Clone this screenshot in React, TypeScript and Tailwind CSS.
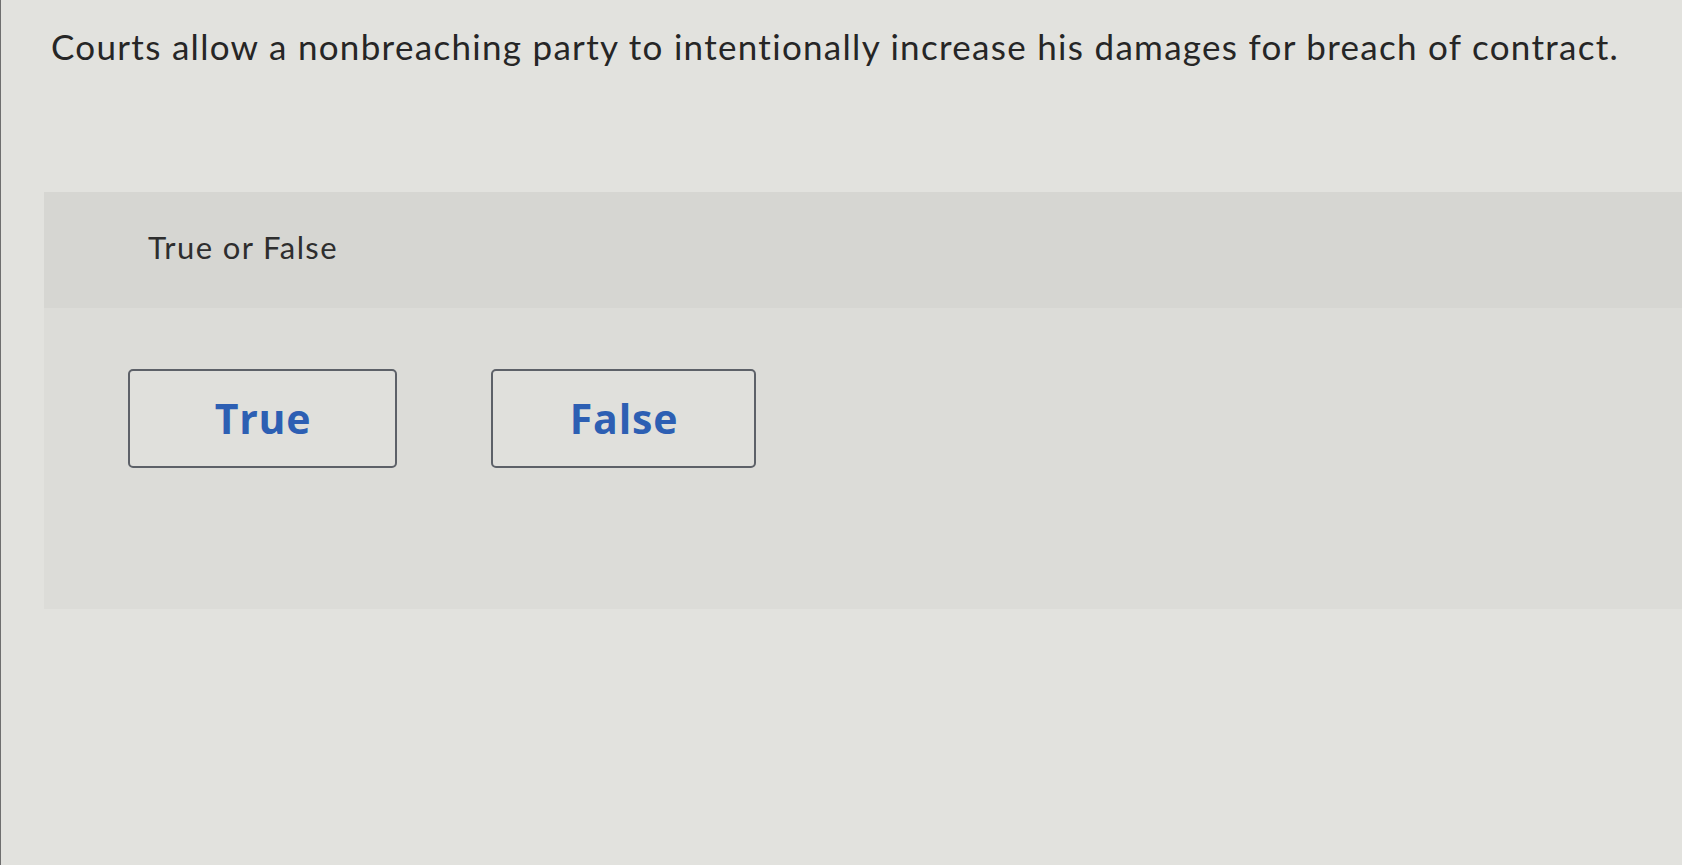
import React from "react";

type Choice = { label: string; width: string };

const choices: Choice[] = [
  { label: "True", width: "w-[269px]" },
  { label: "False", width: "w-[265px]" },
];

function ChoiceButton({ choice }: { choice: Choice }) {
  return (
    <button
      type="button"
      className={`flex h-[99px] ${choice.width} items-center justify-center rounded-[5px] border-2 border-[#5d6168] bg-[#e0e0dc] pl-[1px] font-['Open_Sans',sans-serif] text-[41px] font-bold leading-none tracking-[0.8px] text-[#2d5fb3]`}
    >
      {choice.label}
    </button>
  );
}

export default function App() {
  return (
    <div
      className="min-h-[865px] w-full border-l border-[#6e6e6e] bg-[#e2e2de] text-[#262626]"
      style={{ fontFamily: "Lato, 'Open Sans', sans-serif" }}
    >
      <h1 className="pl-[50px] pt-[25px] text-[35px] font-normal leading-[42px] tracking-[1.3px]">
        Courts allow a nonbreaching party to intentionally increase his damages for breach of contract.
      </h1>

      <section className="ml-[43px] mt-[125px]">
        <div className="h-[116px] bg-[#d6d6d2] pl-[104px] pt-[37px]">
          <p className="text-[31px] leading-[36px] tracking-[1.4px] text-[#2e2e2e]">True or False</p>
        </div>
        <div className="flex h-[301px] items-start gap-[94px] bg-[#dcdcd8] pl-[84px] pt-[61px]">
          {choices.map((c) => (
            <ChoiceButton key={c.label} choice={c} />
          ))}
        </div>
      </section>
    </div>
  );
}
